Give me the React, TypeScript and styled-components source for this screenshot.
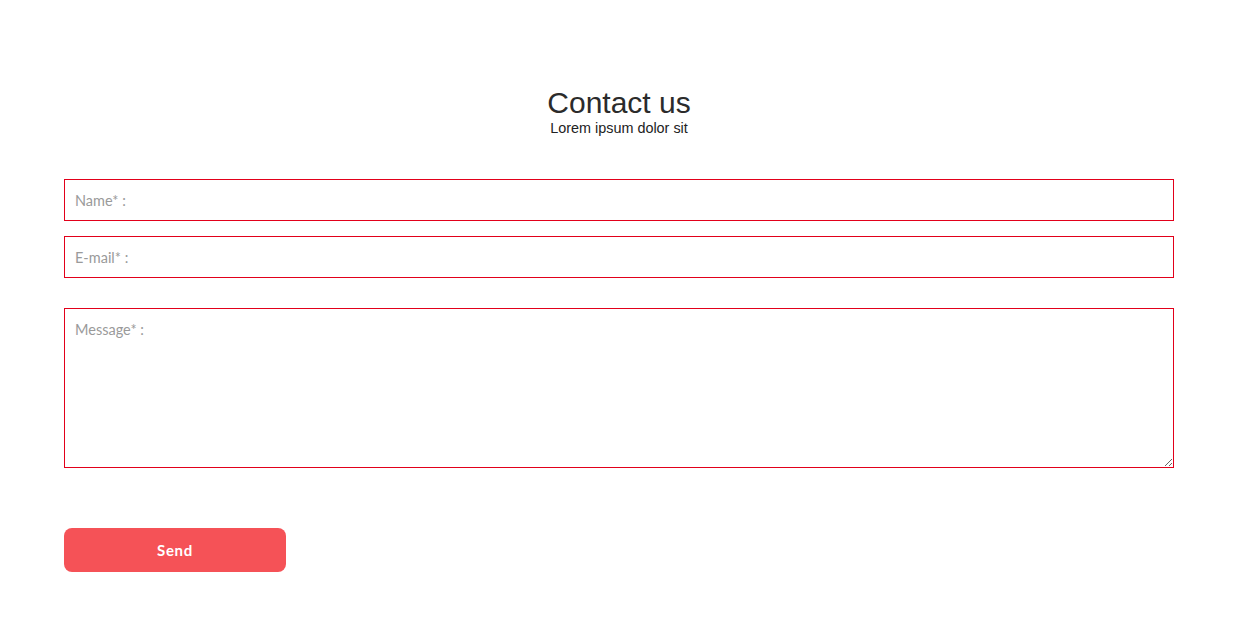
import React from "react";
import styled, { createGlobalStyle } from "styled-components";

const Global = createGlobalStyle`
  html, body { margin: 0; padding: 0; background: #fff; }
  body { font-family: "Liberation Sans", Arial, sans-serif; }
  * { box-sizing: border-box; }
`;

const Page = styled.main`
  width: 1250px;
  padding: 86px 76px 0 64px;
`;

const Header = styled.header`
  display: flex;
  flex-direction: column;
  align-items: center;
  margin-bottom: 42px;
`;

const Title = styled.h1`
  margin: 0;
  font-family: "Liberation Sans", Arial, sans-serif;
  font-weight: 400;
  font-size: 30px;
  line-height: 33px;
  color: #2b2b2b;
`;

const Subtitle = styled.p`
  margin: 0;
  font-family: "Liberation Sans", Arial, sans-serif;
  font-size: 14.4px;
  line-height: 18px;
  color: #222;
`;

const Form = styled.form`
  display: flex;
  flex-direction: column;
`;

const Field = styled.input<{ $gap?: number }>`
  display: block;
  width: 100%;
  height: 42px;
  margin: 0 0 ${(p) => p.$gap ?? 15}px;
  padding: 0 10px;
  border: 1px solid #e2001a;
  border-radius: 0;
  outline: none;
  font-family: Lato, "Noto Sans", sans-serif;
  font-size: 14.5px;
  color: #333;
  &::placeholder { color: #9a9a9a; }
`;

const Area = styled.textarea`
  display: block;
  width: 100%;
  height: 160px;
  margin: 0 0 60px;
  padding: 12px 10px;
  border: 1px solid #e2001a;
  border-radius: 0;
  outline: none;
  font-family: Lato, "Noto Sans", sans-serif;
  font-size: 14.5px;
  line-height: 18px;
  color: #333;
  &::placeholder { color: #9a9a9a; }
`;

const Send = styled.button`
  width: 222px;
  height: 44px;
  border: none;
  border-radius: 8px;
  background: #f55257;
  color: #fff;
  font-family: Lato, "Noto Sans", sans-serif;
  font-weight: 700;
  font-size: 15px;
  letter-spacing: 0.7px;
  cursor: pointer;
`;

export default function App() {
  return (
    <>
      <Global />
      <Page>
        <Header>
          <Title>Contact us</Title>
          <Subtitle>Lorem ipsum dolor sit</Subtitle>
        </Header>
        <Form onSubmit={(e) => e.preventDefault()}>
          <Field type="text" placeholder="Name* :" />
          <Field type="email" placeholder="E-mail* :" $gap={30} />
          <Area placeholder="Message* :" />
          <Send type="submit">Send</Send>
        </Form>
      </Page>
    </>
  );
}
